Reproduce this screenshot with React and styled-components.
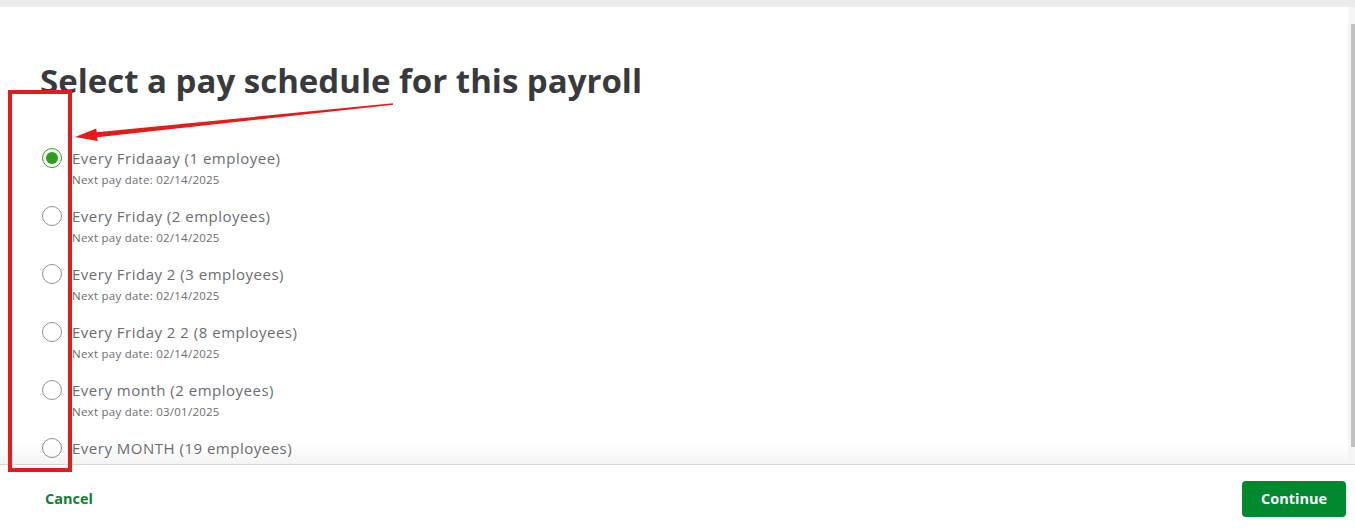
import React, { useState } from 'react';
import styled, { createGlobalStyle } from 'styled-components';

const GlobalStyle = createGlobalStyle`
  html, body {
    margin: 0;
    padding: 0;
    background: #ffffff;
    font-family: 'Open Sans', 'Liberation Sans', sans-serif;
  }
`;

const Page = styled.div`
  position: relative;
  height: 530px;
  display: flex;
  flex-direction: column;
  background: #ebecf0;
  padding-top: 7px;
  box-sizing: border-box;
`;

const Panel = styled.div`
  position: relative;
  flex: 1;
  min-height: 0;
  display: flex;
  background: #ffffff;
  &::after {
    content: '';
    position: absolute;
    left: 0;
    right: 7px;
    bottom: 0;
    height: 22px;
    background: linear-gradient(to bottom, rgba(0, 0, 0, 0), rgba(0, 0, 0, 0.045));
    pointer-events: none;
  }
`;

const Scroller = styled.div`
  flex: 1;
  overflow: hidden;
  background: #ffffff;
`;

const ScrollTrack = styled.div`
  width: 7px;
  flex-shrink: 0;
  background: #f5f5f5;
  display: flex;
  flex-direction: column;
  align-items: flex-end;
  padding: 17px 0;
  box-sizing: border-box;
`;

const ScrollThumb = styled.div`
  width: 4px;
  flex: 1;
  background: #c1c1c1;
`;

const Content = styled.div`
  padding: 52px 40px 30px;
`;

const Title = styled.h1`
  margin: 0 0 45px;
  font-family: 'Open Sans', 'Liberation Sans', sans-serif;
  font-size: 33px;
  line-height: 44px;
  font-weight: 700;
  letter-spacing: 0;
  color: #393a3d;
`;

const List = styled.div`
  display: flex;
  flex-direction: column;
  gap: 18px;
  padding-left: 2px;
`;

const Option = styled.label`
  display: grid;
  grid-template-columns: 20px 1fr;
  column-gap: 10px;
  row-gap: 4px;
  align-items: center;
  cursor: pointer;
`;

const Radio = styled.span`
  width: 20px;
  height: 20px;
  box-sizing: border-box;
  border-radius: 50%;
  border: 1px solid ${(p) => (p.checked ? '#2ca01c' : '#8d9096')};
  display: flex;
  align-items: center;
  justify-content: center;
  &::before {
    content: '';
    width: 12px;
    height: 12px;
    border-radius: 50%;
    background: ${(p) => (p.checked ? '#2ca01c' : 'transparent')};
  }
`;

const Label = styled.span`
  font-size: 15px;
  line-height: 20px;
  letter-spacing: 0.5px;
  color: #6b6c72;
`;

const Sub = styled.span`
  grid-column: 2;
  font-size: 11.5px;
  line-height: 16px;
  letter-spacing: 0.25px;
  color: #6b6c72;
`;

const Footer = styled.div`
  height: 66px;
  flex-shrink: 0;
  box-sizing: border-box;
  border-top: 1px solid #d4d7dc;
  background: #ffffff;
  display: flex;
  align-items: center;
  justify-content: space-between;
  padding: 2px 9px 0 45px;
`;

const TextButton = styled.button`
  border: none;
  background: none;
  padding: 0;
  font-family: 'Open Sans', 'Liberation Sans', sans-serif;
  font-size: 14.5px;
  font-weight: 700;
  color: #0f7f2f;
  cursor: pointer;
`;

const PrimaryButton = styled.button`
  width: 104px;
  height: 36px;
  border: none;
  border-radius: 4px;
  background: #00892f;
  color: #ffffff;
  font-family: 'Open Sans', 'Liberation Sans', sans-serif;
  font-size: 14.5px;
  font-weight: 700;
  cursor: pointer;
`;

const Annotation = styled.svg`
  position: absolute;
  left: 0;
  top: 0;
  pointer-events: none;
`;

const schedules = [
  { id: 1, name: 'Every Fridaaay (1 employee)', next: '02/14/2025' },
  { id: 2, name: 'Every Friday (2 employees)', next: '02/14/2025' },
  { id: 3, name: 'Every Friday 2 (3 employees)', next: '02/14/2025' },
  { id: 4, name: 'Every Friday 2 2 (8 employees)', next: '02/14/2025' },
  { id: 5, name: 'Every month (2 employees)', next: '03/01/2025' },
  { id: 6, name: 'Every MONTH (19 employees)', next: '03/01/2025' },
];

const App = () => {
  const [selected, setSelected] = useState(1);

  return (
    <>
      <GlobalStyle />
      <Page>
        <Panel>
          <Scroller>
            <Content>
              <Title>Select a pay schedule for this payroll</Title>
              <List>
                {schedules.map((s) => (
                  <Option key={s.id} onClick={() => setSelected(s.id)}>
                    <Radio checked={selected === s.id} />
                    <Label>{s.name}</Label>
                    <Sub>Next pay date: {s.next}</Sub>
                  </Option>
                ))}
              </List>
            </Content>
          </Scroller>
          <ScrollTrack>
            <ScrollThumb />
          </ScrollTrack>
        </Panel>
        <Footer>
          <TextButton>Cancel</TextButton>
          <PrimaryButton>Continue</PrimaryButton>
        </Footer>
        <Annotation width="1355" height="530" viewBox="0 0 1355 530">
          <rect x="10" y="92" width="60" height="378" fill="none" stroke="#e31b1b" strokeWidth="4" />
          <polygon
            fill="#e31b1b"
            points="392.9,103.3 96.6,132.2 96.3,128.4 75,137 97.7,141 97.2,137.2 393.1,104.7"
          />
        </Annotation>
      </Page>
    </>
  );
};

export default App;
